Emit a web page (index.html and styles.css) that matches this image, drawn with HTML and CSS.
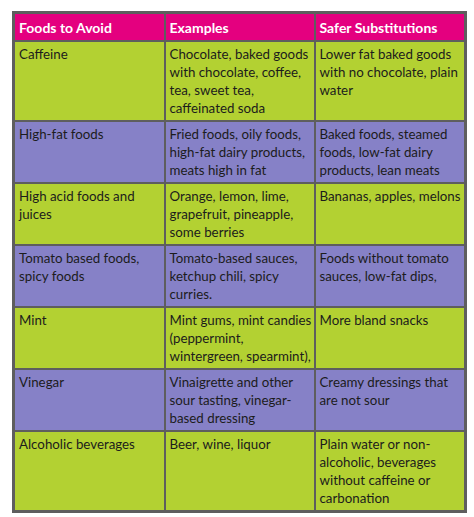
FILE: index.html
```html
<!DOCTYPE html>
<html>
<head>
<meta charset="utf-8">
<link rel="stylesheet" href="styles.css">
</head>
<body>
<table class="foods">
  <colgroup><col class="c1"><col class="c2"><col class="c3"></colgroup>
  <thead>
    <tr class="head"><th>Foods to Avoid</th><th>Examples</th><th>Safer Substitutions</th></tr>
  </thead>
  <tbody>
    <tr class="green"><td>Caffeine</td><td>Chocolate, baked goods with chocolate, coffee, tea, sweet tea, caffeinated soda</td><td>Lower fat baked goods with no chocolate, plain water</td></tr>
    <tr class="purple"><td>High-fat foods</td><td>Fried foods, oily foods, high-fat dairy products, meats high in fat</td><td>Baked foods, steamed foods, low-fat dairy products, lean meats</td></tr>
    <tr class="green"><td>High acid foods and juices</td><td>Orange, lemon, lime, grapefruit, pineapple, some berries</td><td>Bananas, apples, melons</td></tr>
    <tr class="purple"><td>Tomato based foods, spicy foods</td><td>Tomato-based sauces, ketchup chili, spicy curries.</td><td>Foods without tomato sauces, low-fat dips,</td></tr>
    <tr class="green"><td>Mint</td><td>Mint gums, mint candies (peppermint, wintergreen, spearmint),</td><td>More bland snacks</td></tr>
    <tr class="purple"><td>Vinegar</td><td>Vinaigrette and other sour tasting, vinegar-based dressing</td><td>Creamy dressings that are not sour</td></tr>
    <tr class="green"><td>Alcoholic beverages</td><td>Beer, wine, liquor</td><td>Plain water or non-alcoholic, beverages without caffeine or carbonation</td></tr>
  </tbody>
</table>
</body>
</html>
```
FILE: styles.css
```css
html, body {
  margin: 0;
  background: #ffffff;
}
body {
  padding: 11px 0 0 12px;
  font-family: Lato, "Open Sans", sans-serif;
}
.foods {
  border-collapse: collapse;
  width: 452px;
  table-layout: fixed;
  border: 3px solid #5e5e5e;
  font-size: 13.3px;
  line-height: 18px;
  color: #1c1c1c;
}
.c1 { width: 151px; }
.c2 { width: 150px; }
.c3 { width: 151px; }
.foods th, .foods td {
  border: 2px solid #5e5e5e;
  text-align: left;
  vertical-align: top;
  padding: 3px 1px 3px 4px;
}
.head th {
  background: #e4007f;
  color: #ffffff;
  font-weight: 700;
  padding: 5px 1px 3px 4px;
  font-size: 14px;
}
.green td { background: #b3d132; }
.purple td { background: #8681c7; }
```
